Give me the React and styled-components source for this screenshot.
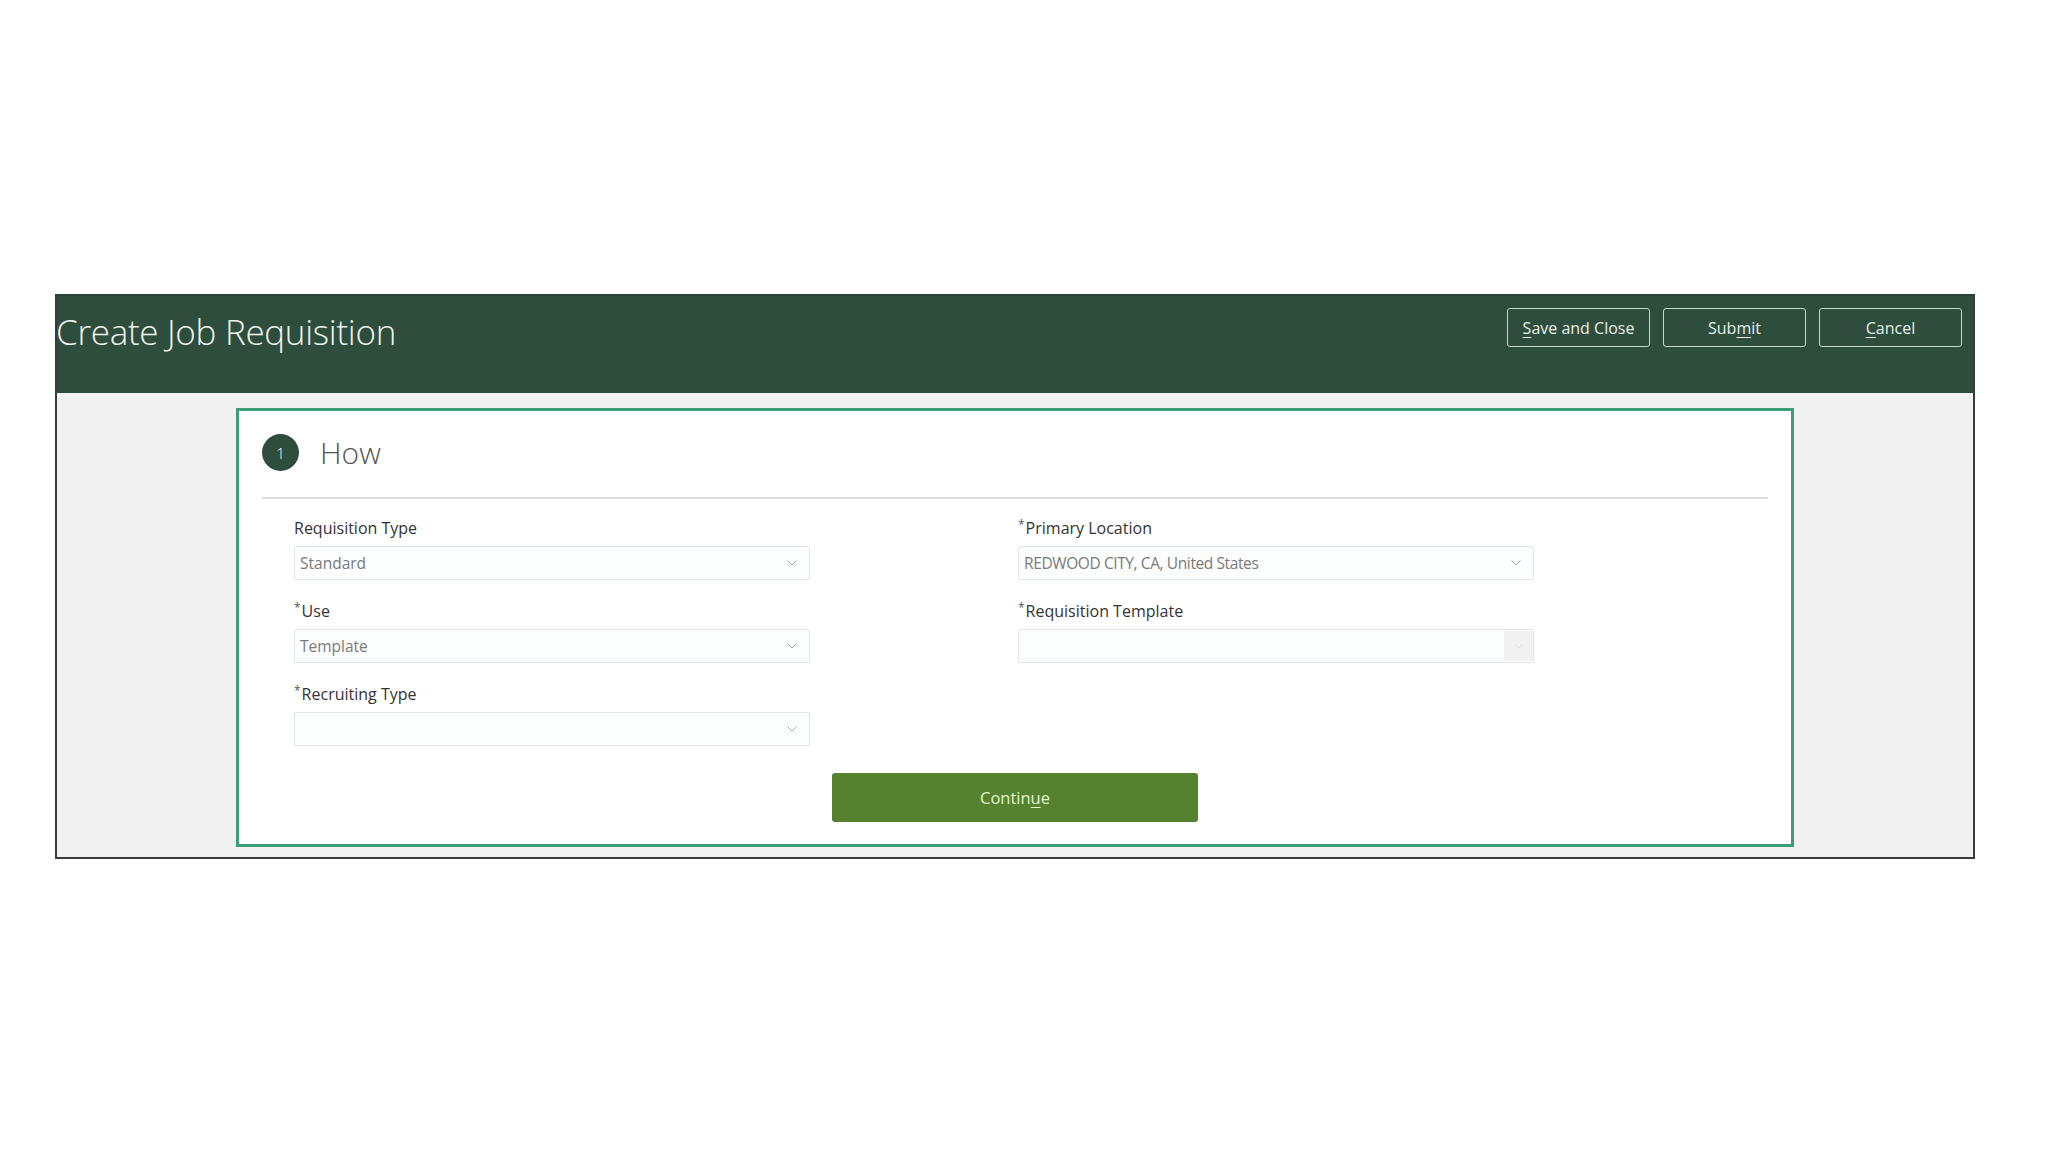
import React from 'react';
import styled, { createGlobalStyle } from 'styled-components';
import { ChevronDown } from 'lucide-react';

const GlobalStyle = createGlobalStyle`
	html, body {
		margin: 0;
		padding: 0;
		background: #ffffff;
		font-family: 'Open Sans', 'Noto Sans', 'Liberation Sans', sans-serif;
	}
`;

const Page = styled.div`
	padding: 294px 0 0 55px;
`;

const Frame = styled.div`
	width: 1920px;
	box-sizing: border-box;
	border: 2px solid #3a3a3a;
	border-top-color: #2b4334;
`;

const Header = styled.header`
	height: 97px;
	background: #2e4d3d;
	display: flex;
	justify-content: space-between;
	align-items: flex-start;
	padding: 0 11px 0 0;
	box-sizing: border-box;
`;

const Title = styled.h1`
	margin: 15px 0 0 -1px;
	font-size: 35px;
	font-weight: 300;
	color: #eef3ef;
	letter-spacing: -0.3px;
	line-height: 42px;
`;

const Actions = styled.div`
	display: flex;
	gap: 13px;
	margin-top: 12px;
`;

const HeaderButton = styled.button`
	width: 143px;
	height: 39px;
	background: transparent;
	border: 1px solid #c6d6cb;
	border-radius: 3px;
	color: #e8efe9;
	font-family: inherit;
	font-size: 16px;
	cursor: pointer;
	padding: 0;

	u {
		text-underline-offset: 3px;
	}
`;

const Body = styled.div`
	background: #f1f1f1;
	padding: 15px 0 10px;
	display: flex;
	justify-content: center;
`;

const Card = styled.section`
	width: 1558px;
	height: 439px;
	box-sizing: border-box;
	background: #ffffff;
	border: 3px solid #3c9d77;
	padding: 23px 23px 0;
`;

const StepHeader = styled.div`
	display: flex;
	align-items: center;
	gap: 21px;
	padding: 0 0 26px;
	border-bottom: 2px solid #dcdcdc;
`;

const StepCircle = styled.div`
	width: 37px;
	height: 37px;
	border-radius: 50%;
	background: #2e4d3d;
	color: #ffffff;
	font-size: 15px;
	font-weight: 300;
	display: grid;
	place-content: center;
`;

const StepTitle = styled.h2`
	margin: 0;
	font-size: 30px;
	font-weight: 300;
	color: #555555;
	line-height: 37px;
`;

const Form = styled.div`
	display: grid;
	grid-template-columns: 516px 516px;
	column-gap: 208px;
	padding: 18px 0 0 32px;
`;

const Column = styled.div`
	display: flex;
	flex-direction: column;
	gap: 20px;
`;

const Field = styled.div`
	display: flex;
	flex-direction: column;
	gap: 7px;
`;

const Label = styled.label`
	font-size: 16px;
	color: #333333;
	line-height: 22px;

	sup {
		font-size: 12px;
		color: #555555;
		vertical-align: 5px;
		line-height: 0;
		margin-right: 1px;
	}
`;

const Select = styled.div`
	height: 34px;
	box-sizing: border-box;
	border: 1px solid #e3e6e6;
	border-radius: 2px;
	background: #fcfdfd;
	display: flex;
	align-items: center;
	justify-content: space-between;
	padding: 0 0 0 5px;
	font-size: 15.5px;
	color: #7a7a7a;
	letter-spacing: ${({ $tight }) => ($tight ? '-0.4px' : '0')};
`;

const Arrow = styled.span`
	width: ${({ $boxed }) => ($boxed ? '29px' : '34px')};
	align-self: stretch;
	display: grid;
	place-content: center;
	background: ${({ $boxed }) => ($boxed ? '#f1f1f1' : 'transparent')};
	color: ${({ $boxed }) => ($boxed ? '#dadada' : '#9a9a9a')};
	margin: ${({ $boxed }) => ($boxed ? '1px 0' : '0')};
`;

const Footer = styled.div`
	display: flex;
	justify-content: center;
	padding-top: 27px;
`;

const ContinueButton = styled.button`
	width: 366px;
	height: 49px;
	border: none;
	border-radius: 3px;
	background: #568230;
	color: #e2f5cf;
	font-family: inherit;
	font-size: 16.5px;
	cursor: pointer;

	u {
		text-underline-offset: 3px;
	}
`;

const fields = {
	left: [
		{ label: 'Requisition Type', value: 'Standard' },
		{ label: 'Use', value: 'Template', required: true },
		{ label: 'Recruiting Type', value: '', required: true },
	],
	right: [
		{ label: 'Primary Location', value: 'REDWOOD CITY, CA, United States', required: true, tight: true },
		{ label: 'Requisition Template', value: '', required: true, boxed: true },
	],
};

const FormField = ({ label, value, required, boxed, tight }) => (
	<Field>
		<Label>
			{required && <sup>*</sup>}
			{label}
		</Label>
		<Select $tight={tight}>
			<span>{value}</span>
			<Arrow $boxed={boxed}>
				<ChevronDown size={boxed ? 13 : 16} strokeWidth={1.4} />
			</Arrow>
		</Select>
	</Field>
);

const App = () => {
	return (
		<Page>
			<GlobalStyle />
			<Frame>
				<Header>
					<Title>Create Job Requisition</Title>
					<Actions>
						<HeaderButton>
							<u>S</u>ave and Close
						</HeaderButton>
						<HeaderButton>
							Sub<u>m</u>it
						</HeaderButton>
						<HeaderButton>
							<u>C</u>ancel
						</HeaderButton>
					</Actions>
				</Header>
				<Body>
					<Card>
						<StepHeader>
							<StepCircle>1</StepCircle>
							<StepTitle>How</StepTitle>
						</StepHeader>
						<Form>
							<Column>
								{fields.left.map((f) => (
									<FormField key={f.label} {...f} />
								))}
							</Column>
							<Column>
								{fields.right.map((f) => (
									<FormField key={f.label} {...f} />
								))}
							</Column>
						</Form>
						<Footer>
							<ContinueButton>
								Contin<u>u</u>e
							</ContinueButton>
						</Footer>
					</Card>
				</Body>
			</Frame>
		</Page>
	);
};

export default App;
